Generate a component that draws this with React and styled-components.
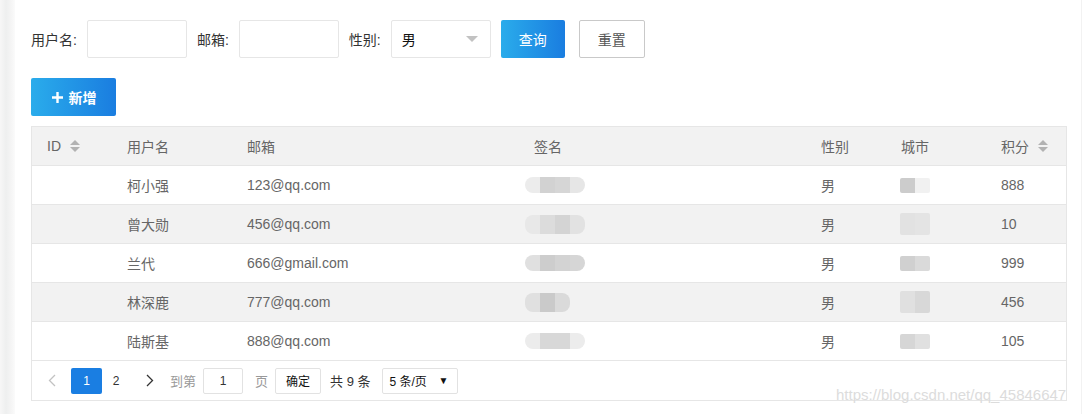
import React from "react";
import styled, { createGlobalStyle } from "styled-components";

const Global = createGlobalStyle`
  html, body { margin: 0; padding: 0; background: #fff; }
  body { font-family: "Liberation Sans", "Noto Sans CJK SC", sans-serif; font-size: 14px; color: #666; }
  * { box-sizing: border-box; }
`;

const Page = styled.div`
  position: relative;
  display: flex;
  width: 1088px;
  height: 414px;
  overflow: hidden;
`;

const SideStrip = styled.div`
  width: 15px;
  flex: none;
  background: linear-gradient(90deg, #f7f7f7 0%, #eeefef 40%, #f6f6f6 80%, #fbfbfb 100%);
`;

const Main = styled.div`
  flex: none;
  width: 1052px;
  padding: 20px 0 0 16px;
  display: flex;
  flex-direction: column;
`;

const RightEdge = styled.div`
  flex: none;
  width: 1px;
  margin-left: 14px;
  background: #f2f2f2;
`;

const SearchBar = styled.div`
  display: flex;
  align-items: center;
  height: 38px;
`;

const Label = styled.span`
  color: #333;
  font-size: 14px;
  margin-right: 10px;
`;

const Input = styled.div`
  width: 100px;
  height: 38px;
  border: 1px solid #e6e6e6;
  border-radius: 2px;
  background: #fff;
  margin-right: 10px;
`;

const Select = styled.div`
  width: 100px;
  height: 38px;
  border: 1px solid #e6e6e6;
  border-radius: 2px;
  display: flex;
  align-items: center;
  justify-content: space-between;
  padding: 0 12px 0 10px;
  color: #111;
  margin-right: 10px;
`;

const Caret = styled.span`
  width: 0;
  height: 0;
  border-left: 6px solid transparent;
  border-right: 6px solid transparent;
  border-top: 6px solid #c2c2c2;
`;

const PrimaryBtn = styled.button`
  height: 38px;
  width: ${(p) => p.$w}px;
  padding: 0;
  border: none;
  border-radius: 2px;
  background: linear-gradient(90deg, #2aaceb 0%, #1a7de0 100%);
  color: #fff;
  font-family: inherit;
  font-size: 14px;
  font-weight: ${(p) => (p.$bold ? 700 : 400)};
  display: inline-flex;
  align-items: center;
  justify-content: center;
  gap: 5px;
  margin-right: ${(p) => p.$mr || 0}px;
  cursor: pointer;
`;

const PlainBtn = styled.button`
  height: 38px;
  width: 66px;
  border: 1px solid #c9c9c9;
  border-radius: 2px;
  background: #fff;
  color: #555;
  font-family: inherit;
  font-size: 14px;
`;

const ToolRow = styled.div`
  margin-top: 20px;
  height: 38px;
  display: flex;
`;

const Table = styled.div`
  margin-top: 10px;
  width: 1036px;
  border: 1px solid #e6e6e6;
`;

const Row = styled.div`
  display: grid;
  grid-template-columns: 80px 120px 287px 287px 80px 100px 1fr;
  height: 39px;
  border-bottom: 1px solid #e6e6e6;
  background: ${(p) => (p.$shade ? "#f2f2f2" : "#fff")};
  align-items: center;
`;

const Cell = styled.div`
  padding-left: ${(p) => (p.$pl != null ? p.$pl : 15)}px;
  color: #666;
  font-size: 14px;
  display: flex;
  align-items: center;
  gap: 9px;
  white-space: nowrap;
`;

const Sort = styled.span`
  display: inline-flex;
  flex-direction: column;
  gap: 2px;
  &::before, &::after {
    content: "";
    width: 0;
    height: 0;
    border-left: 5px solid transparent;
    border-right: 5px solid transparent;
  }
  &::before { border-bottom: 5px solid #b2b2b2; }
  &::after { border-top: 5px solid #b2b2b2; }
`;

const Blur = styled.div`
  display: flex;
  height: ${(p) => p.$h || 16}px;
  border-radius: ${(p) => (p.$square ? 2 : 8)}px;
  overflow: hidden;
  filter: blur(0.6px);
`;

const Px = styled.span`
  width: 15px;
  height: 100%;
  background: ${(p) => p.$c};
`;

const Pager = styled.div`
  height: 39px;
  display: flex;
  align-items: center;
  padding-left: 15px;
  font-size: 12px;
  color: #333;
`;

const Arrow = styled.span`
  width: 24px;
  display: flex;
  justify-content: ${(p) => (p.$off ? "flex-start" : "center")};
  padding-left: ${(p) => (p.$off ? 1 : 0)}px;
  color: ${(p) => (p.$off ? "#c2c2c2" : "#333")};
  margin: 0 ${(p) => p.$mr || 0}px 0 ${(p) => p.$ml || 0}px;
`;

const PageNum = styled.span`
  width: ${(p) => (p.$active ? 31 : 28)}px;
  height: 26px;
  display: flex;
  align-items: center;
  justify-content: center;
  border-radius: 2px;
  background: ${(p) => (p.$active ? "#1a7ee2" : "transparent")};
  color: ${(p) => (p.$active ? "#fff" : "#333")};
  font-size: 12px;
`;

const Muted = styled.span`
  color: #999;
  font-size: 13px;
  margin: 0 ${(p) => p.$mr || 7}px 0 ${(p) => p.$ml || 0}px;
`;

const PageInput = styled.div`
  width: 40px;
  height: 26px;
  border: 1px solid #e2e2e2;
  border-radius: 2px;
  display: flex;
  align-items: center;
  justify-content: center;
  color: #333;
  font-size: 12px;
`;

const SmallBtn = styled.span`
  width: 46px;
  height: 26px;
  border: 1px solid #e2e2e2;
  border-radius: 2px;
  display: flex;
  align-items: center;
  justify-content: center;
  color: #111;
  font-size: 12px;
  margin-right: 9px;
`;

const Count = styled.span`
  font-size: 13px;
  color: #333;
  margin-right: 11px;
`;

const Limit = styled.div`
  width: 76px;
  height: 26px;
  border: 1px solid #e2e2e2;
  border-radius: 2px;
  display: flex;
  align-items: center;
  justify-content: space-between;
  padding: 0 8px 0 7px;
  font-size: 12px;
  color: #111;
`;

const Watermark = styled.div`
  position: absolute;
  left: 836px;
  top: 386px;
  font-family: "Liberation Sans", sans-serif;
  font-size: 15px;
  color: #dcdcdc;
`;

const data = [
  { name: "柯小强", email: "123@qq.com", score: 888,
    sig: ["#ececec", "#d2d2d2", "#d6d6d6", "#e6e6e6"], city: ["#cccccc", "#f1f1f1"] },
  { name: "曾大勋", email: "456@qq.com", score: 10,
    sig: ["#e8e8e8", "#dcdcdc", "#d4d4d4", "#e2e2e2"], city: ["#e2e2e2", "#e4e4e4"], tall: true },
  { name: "兰代", email: "666@gmail.com", score: 999,
    sig: ["#e0e0e0", "#cdcdcd", "#d3d3d3", "#d6d6d6"], city: ["#d0d0d0", "#dadada"] },
  { name: "林深鹿", email: "777@qq.com", score: 456,
    sig: ["#e0e0e0", "#cacaca", "#dadada"], city: ["#e0e0e0", "#d8d8d8"], tall: true },
  { name: "陆斯基", email: "888@qq.com", score: 105,
    sig: ["#ececec", "#d8d8d8", "#d8d8d8", "#ececec"], city: ["#d6d6d6", "#e0e0e0"] },
];

const Plus = () => (
  <svg width="13" height="13" viewBox="0 0 13 13">
    <path d="M6.5 1v11M1 6.5h11" stroke="#fff" strokeWidth="2.4" />
  </svg>
);

const Chev = ({ dir }) => (
  <svg width="8" height="13" viewBox="0 0 8 13">
    <path d={dir === "l" ? "M7 1L1.5 6.5L7 12" : "M1 1L6.5 6.5L1 12"} fill="none" stroke="currentColor" strokeWidth="1.3" />
  </svg>
);

export default function App() {
  return (
    <Page>
      <Global />
      <SideStrip />
      <Main>
        <SearchBar>
          <Label>用户名:</Label>
          <Input />
          <Label>邮箱:</Label>
          <Input />
          <Label>性别:</Label>
          <Select>
            <span>男</span>
            <Caret />
          </Select>
          <PrimaryBtn $w={64} $mr={14}>查询</PrimaryBtn>
          <PlainBtn>重置</PlainBtn>
        </SearchBar>
        <ToolRow>
          <PrimaryBtn $w={85} $bold>
            <Plus />
            新增
          </PrimaryBtn>
        </ToolRow>
        <Table>
          <Row $shade>
            <Cell>ID <Sort /></Cell>
            <Cell>用户名</Cell>
            <Cell>邮箱</Cell>
            <Cell>签名</Cell>
            <Cell>性别</Cell>
            <Cell>城市</Cell>
            <Cell>积分 <Sort /></Cell>
          </Row>
          {data.map((d, i) => (
            <Row key={i} $shade={i % 2 === 1}>
              <Cell />
              <Cell>{d.name}</Cell>
              <Cell>{d.email}</Cell>
              <Cell $pl={6}>
                <Blur $h={d.tall ? 19 : 16}>
                  {d.sig.map((c, j) => <Px key={j} $c={c} />)}
                </Blur>
              </Cell>
              <Cell>男</Cell>
              <Cell $pl={14}>
                <Blur $h={d.tall ? 22 : 15} $square>
                  {d.city.map((c, j) => <Px key={j} $c={c} />)}
                </Blur>
              </Cell>
              <Cell>{d.score}</Cell>
            </Row>
          ))}
          <Pager>
            <Arrow $off><Chev dir="l" /></Arrow>
            <PageNum $active>1</PageNum>
            <PageNum>2</PageNum>
            <Arrow $ml={8} $mr={8}><Chev dir="r" /></Arrow>
            <Muted>到第</Muted>
            <PageInput>1</PageInput>
            <Muted $ml={12} $mr={7}>页</Muted>
            <SmallBtn>确定</SmallBtn>
            <Count>共 9 条</Count>
            <Limit>
              <span>5 条/页</span>
              <span style={{ fontSize: 10 }}>▼</span>
            </Limit>
          </Pager>
        </Table>
      </Main>
      <RightEdge />
      <Watermark>https://blog.csdn.net/qq_45846647</Watermark>
    </Page>
  );
}
